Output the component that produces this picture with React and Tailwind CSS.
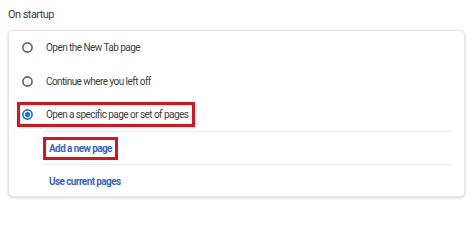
import React from "react";

function Radio({ checked }) {
  return (
    <svg width="11" height="11" viewBox="0 0 11 11" className="shrink-0">
      {checked ? (
        <>
          <circle cx="5.5" cy="5.5" r="4.6" fill="none" stroke="#1a73e8" strokeWidth="1.6" />
          <circle cx="5.5" cy="5.5" r="2.6" fill="#1a73e8" />
        </>
      ) : (
        <circle cx="5.5" cy="5.5" r="4.6" fill="none" stroke="#5f6368" strokeWidth="1.6" />
      )}
    </svg>
  );
}

export default function App() {
  return (
    <div
      className="w-[474px] h-[212px] bg-white overflow-hidden"
      style={{ fontFamily: "Roboto, 'Liberation Sans', sans-serif" }}
    >
      <div className="pl-[8px] h-[30px] flex items-center text-[11px] tracking-[-0.55px] text-[#3c4043]">
        On startup
      </div>
      <div className="ml-[8px] w-[457px] h-[167px] rounded-[5px] border border-[#e6e6e6] shadow-[0_1px_3px_rgba(0,0,0,0.18)] bg-white">
        <div className="h-[33.5px] flex items-center pl-[13px] text-[10px] tracking-[-0.55px] text-[#3c4043] whitespace-nowrap">
          <Radio />
          <span className="ml-[13px]">Open the New Tab page</span>
        </div>
        <div className="h-[33.5px] flex items-center pl-[13px] text-[10px] tracking-[-0.55px] text-[#3c4043] whitespace-nowrap">
          <Radio />
          <span className="ml-[13px]">Continue where you left off</span>
        </div>
        <div className="h-[33px] flex items-center pl-[8px] text-[10px] tracking-[-0.55px] text-[#3c4043] whitespace-nowrap">
          <div className="h-[25px] border-[3px] border-[#e0101a] flex items-center pl-[2px] pr-[4px]">
            <Radio checked />
            <span className="ml-[13px]">Open a specific page or set of pages</span>
          </div>
        </div>
        <div className="ml-[34px] mr-[12px] h-[33px] border-t border-[#ececec] flex items-center">
          <div className="h-[23px] border-[3px] border-[#e0101a] flex items-center px-[3px] text-[10px] tracking-[-0.6px] font-bold text-[#3367d6] whitespace-nowrap">
            Add a new page
          </div>
        </div>
        <div className="ml-[34px] mr-[12px] h-[33px] border-t border-[#ececec] flex items-center pl-[6px] text-[10px] tracking-[-0.6px] font-bold text-[#3367d6] whitespace-nowrap">
          Use current pages
        </div>
      </div>
    </div>
  );
}
